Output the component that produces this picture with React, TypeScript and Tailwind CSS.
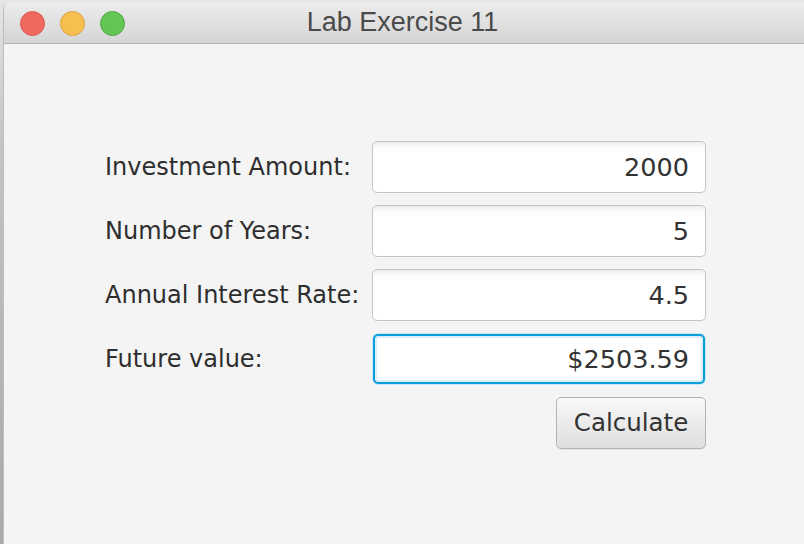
import React from "react";

const labelFont = { fontFamily: '"DejaVu Sans", sans-serif' };

function Field({ value, focused }: { value: string; focused?: boolean }) {
  if (focused) {
    return (
      <div className="h-[52px] rounded-[6px] bg-[#c9e6f5] p-[1px]">
        <div className="h-full rounded-[5px] border-2 border-[#0a9fd8] bg-[#ddeef8] p-[2px]">
          <div className="flex h-full items-center justify-end rounded-[2px] bg-white pr-[12px] text-[25.5px] text-[#333333]" style={labelFont}>
            {value}
          </div>
        </div>
      </div>
    );
  }
  return (
    <div className="flex h-[52px] items-center justify-end rounded-[5px] border-[1.5px] border-[#c4c4c4] bg-[linear-gradient(to_bottom,#ededed_0px,#fbfbfb_5px,#ffffff_10px)] pr-[16px] text-[25.5px] text-[#333333]" style={labelFont}>
      {value}
    </div>
  );
}

export default function App() {
  return (
    <div className="flex h-[544px] w-[804px] overflow-hidden bg-[linear-gradient(to_bottom,#e6e6e6_0px,#c4c4c4_140px,#a9a9a9_544px)] pl-[3px] pt-[2px]">
      <div className="flex flex-1 flex-col overflow-hidden rounded-tl-[7px] border-l border-[#bdbdbd] bg-[#f4f4f4]">
        <div className="relative flex h-[42px] shrink-0 items-center border-b border-[#b3b3b3] bg-[linear-gradient(to_bottom,#ececec,#d5d5d5)]">
          <div className="flex items-center gap-[15px] pl-[16px] pt-[1px]">
            <div className="h-[25px] w-[25px] rounded-full border border-[#dc5a50] bg-[#ee6a5e]" />
            <div className="h-[25px] w-[25px] rounded-full border border-[#dba33c] bg-[#f6bf4f]" />
            <div className="h-[25px] w-[25px] rounded-full border border-[#4fa940] bg-[#62c554]" />
          </div>
          <div
            className="absolute inset-0 flex items-center justify-center pr-[3px] text-[27px] text-[#4a4a4a]"
            style={{ fontFamily: '"Liberation Sans", Arial, sans-serif' }}
          >
            Lab Exercise 11
          </div>
        </div>
        <div className="pl-[101px] pt-[97px]">
          <div className="grid grid-cols-[267px_334px] gap-y-[12px] text-[24px] text-[#2e2e2e]" style={labelFont}>
            <div className="flex h-[52px] items-center">Investment Amount:</div>
            <Field value="2000" />
            <div className="flex h-[52px] items-center">Number of Years:</div>
            <Field value="5" />
            <div className="flex h-[52px] items-center">Annual Interest Rate:</div>
            <Field value="4.5" />
            <div className="flex h-[52px] items-center">Future value:</div>
            <Field value="$2503.59" focused />
            <div />
            <div className="flex justify-end">
              <div className="flex h-[52px] w-[150px] items-center justify-center rounded-[5px] border-[1.5px] border-[#b3b3b3] bg-[linear-gradient(to_bottom,#f9f9f9,#dedede)] text-[24.5px] text-[#333333] shadow-[0_1px_0_#e8e8e8]">
                Calculate
              </div>
            </div>
          </div>
        </div>
      </div>
    </div>
  );
}
